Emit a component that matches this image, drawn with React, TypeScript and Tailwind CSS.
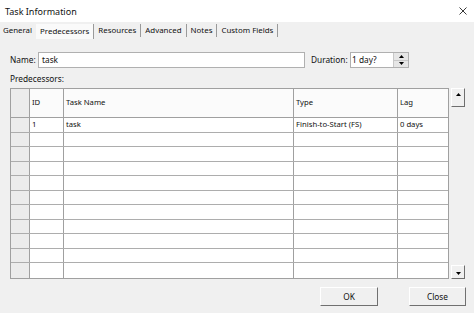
import React from 'react';

const Tri = ({ down = false }: { down?: boolean }) => (
  <svg width="5" height="3" viewBox="0 0 5 3" className="block">
    {down ? <path d="M0 0 H5 L2.5 3 Z" fill="#000" /> : <path d="M0 3 H5 L2.5 0 Z" fill="#000" />}
  </svg>
);

const tabs = ['Resources', 'Advanced', 'Notes', 'Custom Fields'];

// one grid row: row header + 4 columns
const Row = ({ cells, h }: { cells: string[]; h: string }) => (
  <div className={`grid grid-cols-[19px_34px_230px_104px_50px] ${h} border-b border-[#adadad] last:border-b-0`}>
    <div className="bg-[#ececec] border-r border-[#a0a0a0]" />
    {cells.map((c, i) => (
      <div
        key={i}
        className={`bg-white flex items-center pl-[2px] text-[7.7px] leading-none ${i < 3 ? 'border-r border-[#a0a0a0]' : ''}`}
      >
        {c}
      </div>
    ))}
  </div>
);

export default function App() {
  const empty = Array.from({ length: 10 });
  return (
    <div className="w-[474px] h-[313px] overflow-hidden flex flex-col bg-[#f0f0f0] text-[#111] font-['Noto_Sans',sans-serif]">
      {/* Title bar */}
      <div className="h-[22px] bg-white flex items-center justify-between pl-[5px] pr-[5px] shrink-0">
        <span className="text-[9px] leading-none">Task Information</span>
        <svg width="8" height="8" viewBox="0 0 8 8" className="mr-[2px]">
          <path d="M0.5 0.5 L7.5 7.5 M7.5 0.5 L0.5 7.5" stroke="#222" strokeWidth="0.9" />
        </svg>
      </div>

      {/* Tabs */}
      <div className="h-[17px] flex items-stretch text-[7.9px] leading-none shrink-0">
        <div className="flex items-center pl-[3px] pr-[4px]">General</div>
        <div className="flex items-center px-[4px] bg-[#fafafa] border-r border-[#9a9a9a] my-[2px] mb-0">Predecessors</div>
        {tabs.map((t) => (
          <div key={t} className="flex items-center pl-[4px] my-[2px]">
            <span className="flex items-center h-full pr-[4px] border-r border-[#9a9a9a]">{t}</span>
          </div>
        ))}
      </div>

      {/* Body */}
      <div className="flex-1 flex flex-col pl-[10px] pt-[13px]">
        <div className="flex items-center h-[16px] text-[8.3px] leading-none">
          <span className="w-[28px]">Name:</span>
          <div className="w-[267px] h-[16px] bg-white border border-[#b0b0b0] flex items-center pl-[3px]">task</div>
          <span className="ml-[6px] w-[39px]">Duration:</span>
          <div className="w-[59px] h-[16px] bg-white border border-[#b0b0b0] flex items-center">
            <span className="flex-1 pl-[1px]">1 day?</span>
            <div className="w-[15px] h-full flex flex-col bg-[#e6e6e6] border-l border-[#c8c8c8]">
              <div className="flex-1 flex items-center justify-center border-b border-[#c8c8c8]"><Tri /></div>
              <div className="flex-1 flex items-center justify-center"><Tri down /></div>
            </div>
          </div>
        </div>

        <div className="mt-[7px] text-[8.3px] leading-none">Predecessors:</div>

        <div className="mt-[5px] flex">
          {/* Grid */}
          <div className="w-[439px] h-[191px] border border-[#a0a0a0] flex flex-col overflow-hidden">
            <div className="grid grid-cols-[19px_34px_230px_104px_50px] h-[29px] border-b border-[#a0a0a0] shrink-0">
              <div className="bg-[#ececec] border-r border-[#a0a0a0]" />
              {['ID', 'Task Name', 'Type', 'Lag'].map((c, i) => (
                <div
                  key={c}
                  className={`bg-[#fbfbfb] flex items-center pl-[2px] text-[7.7px] leading-none ${i < 3 ? 'border-r border-[#a0a0a0]' : ''}`}
                >
                  {c}
                </div>
              ))}
            </div>
            <Row cells={['1', 'task', 'Finish-to-Start (FS)', '0 days']} h="h-[14.5px]" />
            {empty.map((_, i) => (
              <Row key={i} cells={['', '', '', '']} h="h-[14.5px]" />
            ))}
          </div>

          {/* Scrollbar */}
          <div className="ml-[2px] w-[14px] flex flex-col justify-between">
            <div className="h-[19px] border-r border-b border-[#6e6e6e] border-t border-l border-t-white border-l-white flex justify-center pt-[4px]">
              <Tri />
            </div>
            <div className="h-[14px] border-r border-b border-[#6e6e6e] border-t border-l border-t-white border-l-white flex justify-center items-end pb-[3px]">
              <Tri down />
            </div>
          </div>
        </div>

        {/* Buttons */}
        <div className="mt-[8px] flex justify-end pr-[8px] gap-[31px] text-[8.3px] leading-none">
          <button className="w-[58px] h-[19px] bg-[#f0f0f0] border border-t-white border-l-white border-r-[#707070] border-b-[#707070] flex items-center justify-center">
            OK
          </button>
          <button className="w-[57px] h-[19px] bg-[#f0f0f0] border border-t-white border-l-white border-r-[#707070] border-b-[#707070] flex items-center justify-center">
            Close
          </button>
        </div>
      </div>
    </div>
  );
}
